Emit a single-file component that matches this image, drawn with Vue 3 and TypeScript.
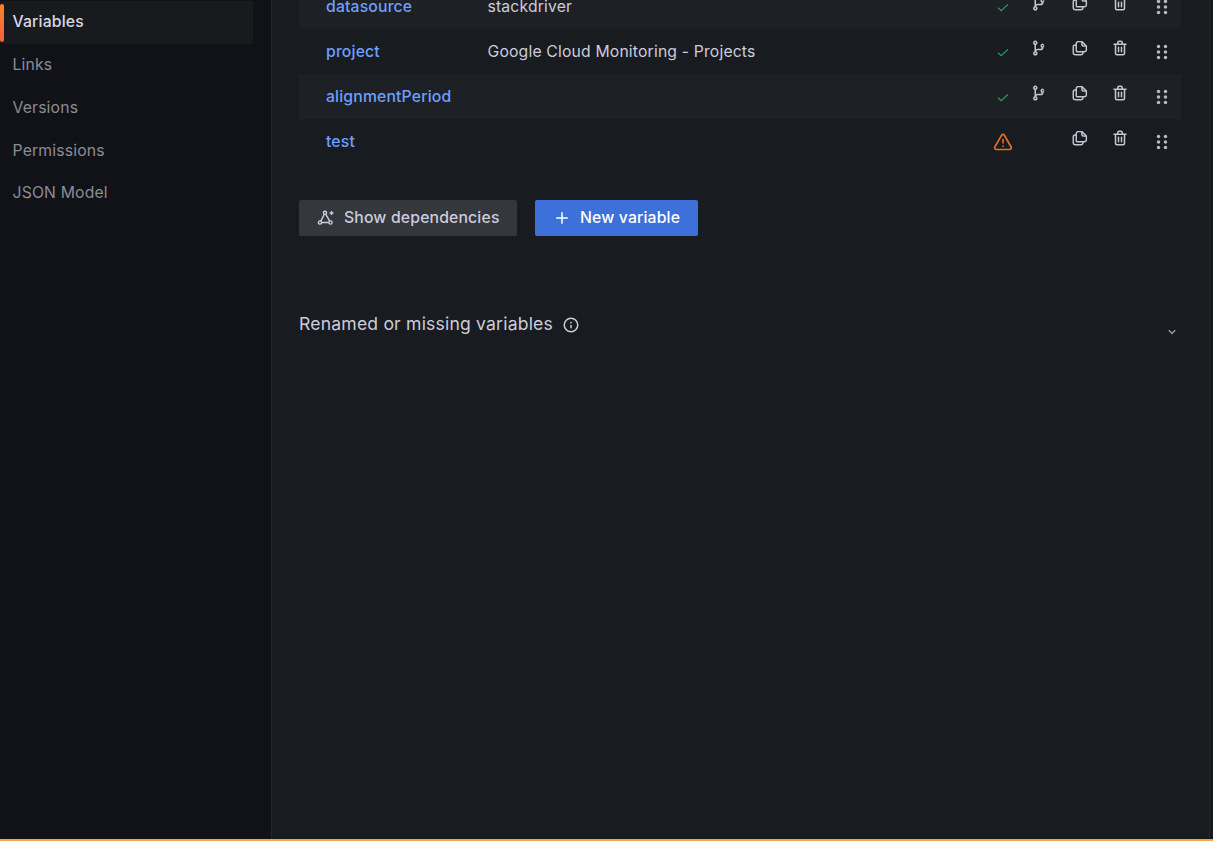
<script setup lang="ts">
interface Row { name: string; def: string; ok: boolean }
const nav: string[] = ['Variables', 'Links', 'Versions', 'Permissions', 'JSON Model']
const rows: Row[] = [
  { name: 'datasource', def: 'stackdriver', ok: true },
  { name: 'project', def: 'Google Cloud Monitoring - Projects', ok: true },
  { name: 'alignmentPeriod', def: '', ok: true },
  { name: 'test', def: '', ok: false },
]
const dots: number[][] = [[8.2, 6], [15.8, 6], [8.2, 12], [15.8, 12], [8.2, 18], [15.8, 18]]
</script>

<template>
  <div class="page">
    <div class="body">
      <nav class="side">
        <a v-for="(n, i) in nav" :key="n" class="nav" :class="{ active: i === 0 }">{{ n }}</a>
      </nav>
      <main class="main">
        <div class="table">
          <div v-for="r in rows" :key="r.name" class="row">
            <span class="name">{{ r.name }}</span>
            <span class="def">{{ r.def }}</span>
            <span class="cell">
              <svg v-if="r.ok" viewBox="0 0 24 24" width="16" height="16"><path d="M4.5 13l4.8 4.6L19.500 8" fill="none" stroke="#22a65a" stroke-width="1.8" /></svg>
              <svg v-else viewBox="0 0 24 24" width="20" height="20" fill="#e8701f"><path d="M12,16a1,1,0,1,0,1,1A1,1,0,0,0,12,16Zm10.67,1.47-8.05-14a3,3,0,0,0-5.24,0l-8,14A3,3,0,0,0,3.94,22H20.06a3,3,0,0,0,2.61-4.53Zm-1.73,2a1,1,0,0,1-.88.51H3.94a1,1,0,0,1-.88-.51,1,1,0,0,1,0-1l8-14a1,1,0,0,1,1.78,0l8.05,14A1,1,0,0,1,20.94,19.49ZM12,8a1,1,0,0,0-1,1v4a1,1,0,0,0,2,0V9A1,1,0,0,0,12,8Z" /></svg>
            </span>
            <span class="cell up">
              <svg v-if="r.ok" viewBox="0 0 24 24" width="18" height="18" fill="#c6c6d4"><path d="M17,6.06a3,3,0,0,0-1.15,5.77A2,2,0,0,1,14,13.06H10a3.91,3.91,0,0,0-2,.56V7.88a3,3,0,1,0-2,0v8.36a3,3,0,1,0,2.16,0,2,2,0,0,1,1.84-1.18h4a4,4,0,0,0,4-3.86A3,3,0,0,0,17,6.06ZM7,4.06a1,1,0,1,1-1,1A1,1,0,0,1,7,4.06Zm0,16a1,1,0,1,1,1-1A1,1,0,0,1,7,20.06Zm10-10a1,1,0,1,1,1-1A1,1,0,0,1,17,10.06Z" /></svg>
            </span>
            <span class="cell up">
              <svg viewBox="0 0 24 24" width="18" height="18" fill="none" stroke="#c6c6d4" stroke-width="1.9" stroke-linejoin="round"><path d="M8.5 3.5h6l6 6v4.5a3 3 0 0 1-3 3h-9a1.500 1.500 0 0 1-1.500-1.500V6a2.500 2.500 0 0 1 2.500-2.500z" /><path d="M14.500 3.500v3a3 3 0 0 0 3 3h3" /><path d="M7 8H5.500A2.500 2.500 0 0 0 3 10.500V18a3 3 0 0 0 3 3h7a3 3 0 0 0 3-3v-1" /></svg>
            </span>
            <span class="cell up">
              <svg viewBox="0 0 24 24" width="18" height="18" fill="#c6c6d4"><path d="M10,18a1,1,0,0,0,1-1V11a1,1,0,0,0-2,0v6A1,1,0,0,0,10,18ZM20,6H16V5a3,3,0,0,0-3-3H11A3,3,0,0,0,8,5V6H4A1,1,0,0,0,4,8H5V19a3,3,0,0,0,3,3h8a3,3,0,0,0,3-3V8h1a1,1,0,0,0,0-2ZM10,5a1,1,0,0,1,1-1h2a1,1,0,0,1,1,1V6H10Zm7,14a1,1,0,0,1-1,1H8a1,1,0,0,1-1-1V8H17Zm-3-1a1,1,0,0,0,1-1V11a1,1,0,0,0-2,0v6A1,1,0,0,0,14,18Z" /></svg>
            </span>
            <span class="cell">
              <svg viewBox="0 0 24 24" width="22" height="22" fill="#b8b8c6"><circle v-for="(d, i) in dots" :key="i" :cx="d[0]" :cy="d[1]" r="1.9" /></svg>
            </span>
          </div>
        </div>

        <div class="actions">
          <button class="btn secondary">
            <svg viewBox="0 0 18 18" width="18" height="18" fill="none" stroke="#ccccdc" stroke-width="1.4"><circle cx="8" cy="3.800" r="1.600" /><circle cx="3" cy="13.500" r="1.600" /><circle cx="13.500" cy="13.500" r="1.600" /><path d="M7.300 5.200L3.800 12.100M8.700 5.200L12.700 12.100M4.600 13.500H11.900" /><path d="M12.500 4h4M14.500 2v4" /></svg>
            <span class="label">Show dependencies</span>
          </button>
          <button class="btn primary">
            <svg viewBox="0 0 24 24" width="18" height="18" fill="#fff"><path d="M19,11H13V5a1,1,0,0,0-2,0v6H5a1,1,0,0,0,0,2h6v6a1,1,0,0,0,2,0V13h6a1,1,0,0,0,0-2Z" /></svg>
            <span class="label">New variable</span>
          </button>
        </div>

        <div class="section">
          <h5 class="title">
            Renamed or missing variables
            <svg class="info" viewBox="0 0 24 24" width="18" height="18" fill="#ccccdc"><path d="M12,2A10,10,0,1,0,22,12,10,10,0,0,0,12,2Zm0,18a8,8,0,1,1,8-8A8,8,0,0,1,12,20Zm0-8.500a1,1,0,0,0-1,1v3a1,1,0,0,0,2,0v-3A1,1,0,0,0,12,11.500Zm0-4a1.250,1.250,0,1,0,1.250,1.250A1.250,1.250,0,0,0,12,7.500Z" /></svg>
          </h5>
          <svg class="chev" viewBox="0 0 24 24" width="16" height="16" fill="#9d9da8"><path d="M17,9.170a1,1,0,0,0-1.410,0L12,12.710,8.460,9.170a1,1,0,0,0-1.410,0,1,1,0,0,0,0,1.420l4.240,4.240a1,1,0,0,0,1.420,0L17,10.590A1,1,0,0,0,17,9.170Z" /></svg>
        </div>
      </main>
      <div class="gutter"></div>
    </div>
    <div class="strip"></div>
  </div>
</template>

<style>
html, body { background: #181b1f; overflow: hidden; }
</style>

<style scoped>
.page {
  height: 100vh;
  display: flex;
  flex-direction: column;
  overflow: hidden;
  font-family: Inter, "Liberation Sans", sans-serif;
  color: #ccccdc;
  background: #181b1f;
}
.body { flex: 1; min-height: 0; display: flex; }
.side {
  flex: none;
  width: 272px;
  box-sizing: border-box;
  border-right: 1px solid #25272c;
  background: #111217;
  padding: 1px 18px 0 0;
  display: flex;
  flex-direction: column;
}
.nav {
  position: relative;
  height: 42.75px;
  padding: 0 0 1px 12.5px;
  box-sizing: border-box;
  display: flex;
  align-items: center;
  font-size: 15.75px;
  letter-spacing: 0.01em;
  color: #8b8b96;
  border-radius: 2px;
}
.nav.active {
  color: #d8d8e4;
  font-weight: 500;
  background: #181a1e;
}
.nav.active::before {
  content: "";
  position: absolute;
  left: 0;
  top: 3px;
  bottom: 2px;
  width: 4px;
  border-radius: 2px;
  background: linear-gradient(#f8862a, #f55f3e);
}
.main { flex: 1; min-width: 0; padding: 0 28px 0 27px; }
.table { margin-top: -16px; }
.row {
  height: 45px;
  display: grid;
  grid-template-columns: 161px 505px 22px 50px 32px 48px 36px;
  padding-left: 27px;
  align-items: center;
  font-size: 15.75px;
  letter-spacing: 0.01em;
}
.row:nth-child(odd) { background: #1d2025; }
.name { color: #6e9fff; font-weight: 500; }
.def { color: #ccccdc; padding-left: 0.5px; }
.cell { display: flex; justify-content: center; align-items: center; }
.up { position: relative; top: -4px; }
.actions { display: flex; gap: 18px; margin-top: 36px; }
.btn {
  height: 36px;
  padding: 0 17.5px 0 18px;
  display: inline-flex;
  align-items: center;
  gap: 9px;
  border: none;
  border-radius: 2px;
  font: 500 15.75px Inter, "Liberation Sans", sans-serif;
  letter-spacing: 0.01em;
}
.label { position: relative; top: -1px; }
.secondary { background: #34373c; color: #ccccdc; }
.primary { background: #3d71d9; color: #fff; }
.section {
  margin-top: 71px;
  display: flex;
  justify-content: space-between;
  align-items: center;
  height: 33px;
  padding-right: 1px;
}
.title {
  margin: 0;
  font-size: 17.6px;
  font-weight: 400;
  letter-spacing: 0.01em;
  display: flex;
  align-items: center;
  gap: 9.5px;
}
.info { position: relative; top: 1px; }
.chev { position: relative; top: 8px; }
.gutter { width: 4px; flex: none; background: #16181c; border-left: 1px solid #25272c; box-sizing: border-box; }
.strip { height: 2px; flex: none; background: #f8a53e; }
</style>
